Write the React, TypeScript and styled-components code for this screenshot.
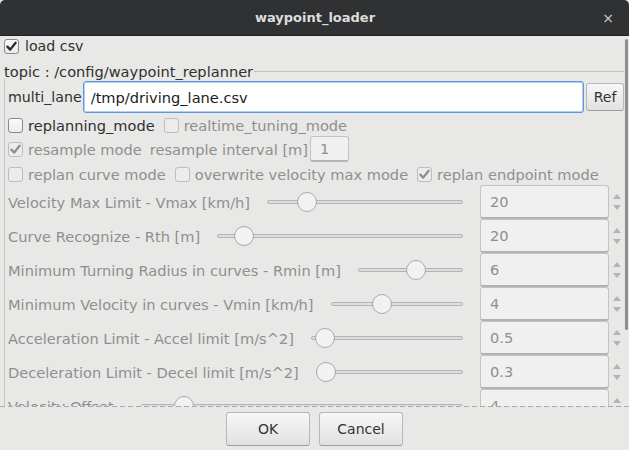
import React from 'react';
import styled, { createGlobalStyle } from 'styled-components';

const Global = createGlobalStyle`
  html, body { margin: 0; padding: 0; background: #e8e8e7; }
  body { font-family: "DejaVu Sans", "Liberation Sans", sans-serif; font-size: 14.6px; color: #323232; }
  * { box-sizing: border-box; }
`;

const Window = styled.div`
  width: 629px;
  height: 450px;
  display: flex;
  flex-direction: column;
  background: #e8e8e7;
  overflow: hidden;
`;

const TitleBar = styled.div`
  height: 36px;
  flex: none;
  background: #2f3133;
  border-radius: 5px 5px 0 0;
  border-bottom: 1px solid #1f2021;
  display: grid;
  grid-template-columns: 1fr auto 1fr;
  align-items: center;
  color: #dedede;
  font-weight: bold;
  font-size: 13px;
`;

const Title = styled.div`
  grid-column: 2;
  margin-left: 1px;
`;

const Close = styled.div`
  grid-column: 3;
  justify-self: end;
  margin-right: 15px;
  font-weight: normal;
  font-size: 14px;
  color: #cfcfcf;
`;

const Main = styled.div`
  display: flex;
  height: 370px;
  flex: none;
`;

const Viewport = styled.div`
  width: 624px;
  height: 370px;
  overflow: hidden;
  display: flex;
  flex-direction: column;
`;

const ScrollTrack = styled.div`
  width: 5px;
  padding: 3px 1px 0 1px;
`;

const Thumb = styled.div`
  width: 3px;
  height: 291px;
  background: #8f8f8f;
  border-radius: 2px;
`;

const DashedLine = styled.div`
  height: 1px;
  flex: none;
  background: repeating-linear-gradient(90deg, #a9a9a9 0 5px, transparent 5px 8px);
`;

const Footer = styled.div`
  flex: 1;
  display: flex;
  justify-content: center;
  align-items: center;
  gap: 9px;
`;

const Button = styled.button<{ $w: number; $h: number }>`
  width: ${p => p.$w}px;
  height: ${p => p.$h}px;
  flex: none;
  border: 1px solid #b7b7b7;
  border-bottom-color: #9f9f9f;
  border-radius: 3px;
  background: linear-gradient(#f7f7f7, #e1e1e1);
  font-family: inherit;
  font-size: 14px;
  color: #333;
  padding: 0;
`;

const LoadRow = styled.div`
  height: 20px;
  flex: none;
  display: flex;
  align-items: center;
  padding-left: 4px;
  gap: 6px;
`;

const GroupHeader = styled.div`
  margin-top: 7px;
  height: 16px;
  flex: none;
  display: flex;
  align-items: center;
  padding-left: 4px;
`;

const GroupLine = styled.div`
  flex: 1;
  height: 1px;
  background: #c3c3c3;
  margin-left: 1px;
`;

const GroupBody = styled.div`
  margin-left: 4px;
  border-left: 1px solid #c6c6c6;
  padding-left: 3px;
  display: flex;
  flex-direction: column;
`;

const LaneRow = styled.div`
  margin-top: 2px;
  height: 32px;
  flex: none;
  display: flex;
  align-items: center;
`;

const FileInput = styled.input`
  flex: 1;
  min-width: 0;
  height: 32px;
  margin-left: 1px;
  border: 1px solid #5d97dd;
  box-shadow: inset 0 0 0 1px #b4cff0;
  border-radius: 3px;
  background: #fff;
  padding: 0 0 0 7px;
  font-family: inherit;
  font-size: 14.6px;
  color: #1c1c1c;
  outline: none;
`;

const RefButton = styled(Button)`
  margin-left: 2px;
`;

const CheckRow = styled.div<{ $mt: number; $h: number }>`
  margin-top: ${p => p.$mt}px;
  height: ${p => p.$h}px;
  flex: none;
  display: flex;
  align-items: center;
  gap: 9px;
`;

const CheckItem = styled.label`
  display: flex;
  align-items: center;
  gap: 5px;
  white-space: nowrap;
`;

const Box = styled.span<{ $dis?: boolean }>`
  width: 15px;
  height: 15px;
  flex: none;
  border: 1px solid ${p => (p.$dis ? '#bdbdbd' : '#8a8a8a')};
  border-radius: 3px;
  background: ${p => (p.$dis ? '#ececec' : 'linear-gradient(#fbfbfb, #ebebeb)')};
  display: flex;
  align-items: center;
  justify-content: center;
`;

const Text = styled.span<{ $dis?: boolean; $size?: number }>`
  color: ${p => (p.$dis ? '#8f8f8f' : '#303030')};
  font-size: ${p => p.$size ?? 14.6}px;
  white-space: nowrap;
`;

const LaneLabel = styled(Text)`
  font-size: 14.2px;
`;

const IntervalLabel = styled(Text)`
  margin-left: -1px;
`;

const SmallSpin = styled.div`
  width: 39px;
  height: 26px;
  margin-left: -7px;
  border: 1px solid #c4c4c4;
  border-bottom: 2px solid #b4b4b4;
  border-radius: 3px;
  background: #f0f0f0;
  color: #8f8f8f;
  display: flex;
  align-items: center;
  padding-left: 9px;
`;

const SliderRow = styled.div`
  height: 34px;
  flex: none;
  display: flex;
  align-items: center;
`;

const Slider = styled.div`
  flex: 1;
  height: 34px;
  margin: 0 17px;
  position: relative;
  display: flex;
  align-items: center;
`;

const Groove = styled.div`
  width: 100%;
  height: 4px;
  border: 1px solid #b3b3b3;
  border-radius: 2px;
  background: #dedede;
`;

const Handle = styled.div<{ $pos: number }>`
  position: absolute;
  top: 7px;
  left: calc((100% - 20px) * ${p => p.$pos});
  width: 20px;
  height: 20px;
  border-radius: 50%;
  border: 1px solid #a8a8a8;
  background: #f2f2f2;
`;

const SpinBox = styled.div`
  width: 129px;
  height: 34px;
  flex: none;
  border: 1px solid #c4c4c4;
  border-bottom: 2px solid #b2b2b2;
  border-radius: 3px;
  background: #f0f0f0;
  color: #8f8f8f;
  display: flex;
  align-items: center;
  padding-left: 9px;
`;

const Arrows = styled.div`
  width: 15px;
  flex: none;
  display: flex;
  flex-direction: column;
  align-items: center;
  gap: 6px;
`;

const Up = styled.div`
  width: 0;
  height: 0;
  border-left: 4px solid transparent;
  border-right: 4px solid transparent;
  border-bottom: 5px solid #b3b3b3;
`;

const Down = styled.div`
  width: 0;
  height: 0;
  border-left: 4px solid transparent;
  border-right: 4px solid transparent;
  border-top: 5px solid #b3b3b3;
`;

const Check: React.FC<{ checked?: boolean; dis?: boolean }> = ({ checked, dis }) => (
  <Box $dis={dis}>
    {checked && (
      <svg width="11" height="11" viewBox="0 0 11 11">
        <path
          d="M1.4 5.6 L4.2 8.6 L9.6 1.8"
          fill="none"
          stroke={dis ? '#8e8e8e' : '#2b2b2b'}
          strokeWidth="2.3"
          strokeLinecap="round"
          strokeLinejoin="round"
        />
      </svg>
    )}
  </Box>
);

const CheckOpt: React.FC<{ label: string; checked?: boolean; dis?: boolean }> = ({ label, checked, dis }) => (
  <CheckItem>
    <Check checked={checked} dis={dis} />
    <Text $dis={dis}>{label}</Text>
  </CheckItem>
);

const sliders = [
  { label: 'Velocity Max Limit - Vmax [km/h]', value: '20', pos: 0.17 },
  { label: 'Curve Recognize - Rth [m]', value: '20', pos: 0.076 },
  { label: 'Minimum Turning Radius in curves - Rmin [m]', value: '6', pos: 0.57 },
  { label: 'Minimum Velocity in curves - Vmin [km/h]', value: '4', pos: 0.373 },
  { label: 'Acceleration Limit - Accel limit [m/s^2]', value: '0.5', pos: 0.03 },
  { label: 'Deceleration Limit - Decel limit [m/s^2]', value: '0.3', pos: 0 },
  { label: 'Velocity Offset -', value: '4', pos: 0.11 },
];

export default function App() {
  return (
    <>
      <Global />
      <Window>
        <TitleBar>
          <Title>waypoint_loader</Title>
          <Close>×</Close>
        </TitleBar>
        <Main>
          <Viewport>
            <LoadRow>
              <Check checked />
              <Text $size={14.2}>load csv</Text>
            </LoadRow>
            <GroupHeader>
              <Text>topic : /config/waypoint_replanner</Text>
              <GroupLine />
            </GroupHeader>
            <GroupBody>
              <LaneRow>
                <LaneLabel>multi_lane</LaneLabel>
                <FileInput readOnly value="/tmp/driving_lane.csv" />
                <RefButton $w={38} $h={28}>Ref</RefButton>
              </LaneRow>
              <CheckRow $mt={4} $h={16}>
                <CheckOpt label="replanning_mode" />
                <CheckOpt label="realtime_tuning_mode" dis />
              </CheckRow>
              <CheckRow $mt={3} $h={26}>
                <CheckOpt label="resample mode" checked dis />
                <IntervalLabel $dis>resample interval [m]</IntervalLabel>
                <SmallSpin>1</SmallSpin>
              </CheckRow>
              <CheckRow $mt={4} $h={16}>
                <CheckOpt label="replan curve mode" dis />
                <CheckOpt label="overwrite velocity max mode" dis />
                <CheckOpt label="replan endpoint mode" checked dis />
              </CheckRow>
              <div style={{ height: 3 }} />
              {sliders.map(s => (
                <SliderRow key={s.label}>
                  <Text $dis>{s.label}</Text>
                  <Slider>
                    <Groove />
                    <Handle $pos={s.pos} />
                  </Slider>
                  <SpinBox>{s.value}</SpinBox>
                  <Arrows>
                    <Up />
                    <Down />
                  </Arrows>
                </SliderRow>
              ))}
            </GroupBody>
          </Viewport>
          <ScrollTrack>
            <Thumb />
          </ScrollTrack>
        </Main>
        <DashedLine />
        <Footer>
          <Button $w={84} $h={34}>OK</Button>
          <Button $w={84} $h={34}>Cancel</Button>
        </Footer>
      </Window>
    </>
  );
}
